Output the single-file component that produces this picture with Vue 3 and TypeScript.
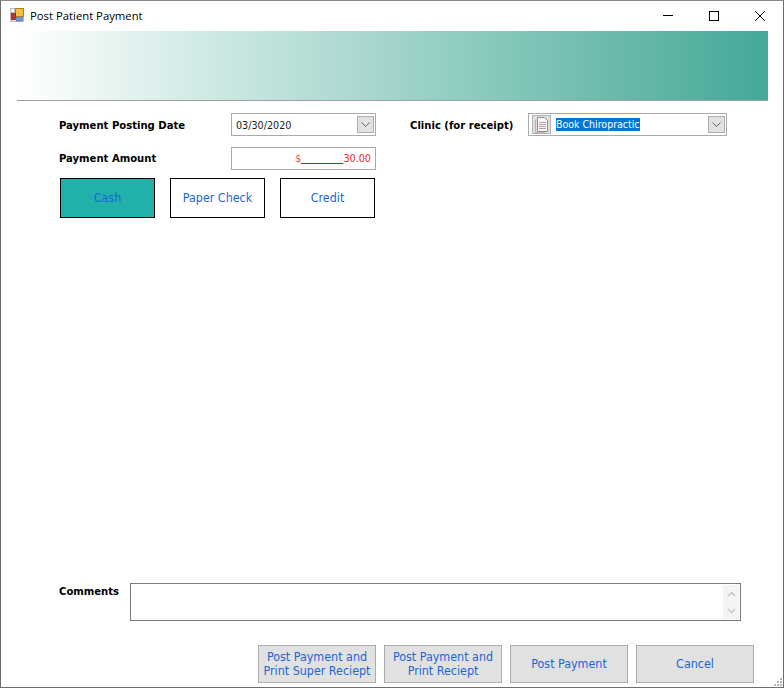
<script setup lang="ts">
const footerButtons: string[][] = [
  ['Post Payment and', 'Print Super Reciept'],
  ['Post Payment and', 'Print Reciept'],
  ['Post Payment'],
  ['Cancel'],
]
const payTypes = ['Cash', 'Paper Check', 'Credit']
</script>

<template>
  <div class="window">
    <header class="titlebar">
      <svg class="app-icon" width="14" height="14" viewBox="0 0 14 14">
        <rect x="0.5" y="0.5" width="13" height="13" fill="#f6f6f6" stroke="#bcbcbc" />
        <path d="M0 4.5H6M4.5 0V5M0 11.5H6M3 11V14" stroke="#bcbcbc" fill="none" />
        <rect x="5.5" y="0.5" width="8" height="8" fill="#f2c23e" stroke="#b07c1c" />
        <rect x="1.5" y="5.5" width="4" height="6" fill="#c0332c" stroke="#7a1f1a" stroke-width="0.7" />
        <rect x="6.5" y="9.5" width="6" height="3.5" fill="#6a9ae2" stroke="#3f69ad" stroke-width="0.6" />
      </svg>
      <span class="title">Post Patient Payment</span>
      <div class="controls">
        <svg width="12" height="12" viewBox="0 0 12 12"><path d="M1 5.5H11" stroke="#000" fill="none" /></svg>
        <svg width="12" height="12" viewBox="0 0 12 12"><rect x="1.5" y="1.5" width="9" height="9" stroke="#000" fill="none" /></svg>
        <svg width="12" height="12" viewBox="0 0 12 12"><path d="M1 1L11 11M11 1L1 11" stroke="#000" fill="none" /></svg>
      </div>
    </header>

    <div class="banner"></div>

    <main class="form">
      <div class="columns">
        <div class="left">
          <div class="row date-row">
            <label class="label">Payment Posting Date</label>
            <div class="field">
              <span class="value">03/30/2020</span>
              <span class="drop">
                <svg width="9" height="5" viewBox="0 0 9 5"><path d="M0.5 0.5L4.5 4.5L8.5 0.5" stroke="#666" fill="none" /></svg>
              </span>
            </div>
          </div>
          <div class="row amount-row">
            <label class="label">Payment Amount</label>
            <div class="field amount"><span class="dollar">$</span><span class="blank"></span><span>30.00</span></div>
          </div>
          <div class="pay-types">
            <button v-for="(p, i) in payTypes" :key="p" class="pay" :class="{ active: i === 0 }">{{ p }}</button>
          </div>
        </div>
        <div class="clinic">
          <label class="label clinic-label">Clinic (for receipt)</label>
          <div class="field combo">
            <span class="doc">
              <svg width="15" height="17" viewBox="0 0 15 17">
                <path d="M3.5 1.5H10.5L13.5 4.5V15.5H3.5Z" fill="#f8f8f8" stroke="#8f8f8f" />
                <path d="M1.5 4V16.5H11" fill="none" stroke="#c8aeaa" />
                <path d="M5 6.5H12M5 8.5H12M5 10.5H12M5 12.5H12" stroke="#b79f9f" />
              </svg>
            </span>
            <span class="selected">Book Chiropractic</span>
            <span class="drop">
              <svg width="9" height="5" viewBox="0 0 9 5"><path d="M0.5 0.5L4.5 4.5L8.5 0.5" stroke="#666" fill="none" /></svg>
            </span>
          </div>
        </div>
      </div>

      <div class="comments">
        <label class="label">Comments</label>
        <div class="memo">
          <div class="scroll">
            <svg width="9" height="6" viewBox="0 0 9 6"><path d="M1 5L4.5 1.5L8 5" stroke="#c4c4c4" stroke-width="1.5" fill="none" /></svg>
            <svg width="9" height="6" viewBox="0 0 9 6"><path d="M1 1L4.5 4.5L8 1" stroke="#c4c4c4" stroke-width="1.5" fill="none" /></svg>
          </div>
        </div>
      </div>

      <footer class="footer">
        <button v-for="(b, i) in footerButtons" :key="i" class="action">
          <span v-for="line in b" :key="line" class="line">{{ line }}</span>
        </button>
      </footer>
    </main>

    <svg class="grip" width="10" height="10" viewBox="0 0 10 10" fill="#b4b4b4">
      <rect x="7" y="1" width="2" height="2" />
      <rect x="4" y="4" width="2" height="2" />
      <rect x="7" y="4" width="2" height="2" />
      <rect x="1" y="7" width="2" height="2" />
      <rect x="4" y="7" width="2" height="2" />
      <rect x="7" y="7" width="2" height="2" />
    </svg>
  </div>
</template>

<style scoped>
.window {
  position: relative;
  box-sizing: border-box;
  width: 784px;
  height: 688px;
  background: #fff;
  border: 1px solid #6e6e6e;
  border-top-color: #8a8a8a;
  display: flex;
  flex-direction: column;
  font-family: "DejaVu Sans Condensed", "DejaVu Sans", sans-serif;
  font-size: 11px;
  overflow: hidden;
}
.titlebar {
  height: 30px;
  flex: none;
  display: flex;
  align-items: center;
  padding-left: 9px;
}
.app-icon { flex: none; margin-bottom: 2px; }
.title {
  margin-left: 6px;
  margin-bottom: 2px;
  font-family: "Open Sans", sans-serif;
  font-size: 11.3px;
  color: #000;
}
.controls {
  margin-left: auto;
  display: flex;
  gap: 34px;
  padding-right: 17px;
}
.banner {
  flex: none;
  height: 69px;
  margin: 0 15px 0 16px;
  background: linear-gradient(90deg, #ffffff 0%, #44a997 100%);
  border-bottom: 1px solid #a0a0a0;
}
.form {
  flex: 1;
  display: flex;
  flex-direction: column;
  min-height: 0;
}
.columns {
  display: flex;
  padding: 12px 0 0 58px;
}
.left { width: 351px; flex: none; }
.row { display: flex; align-items: center; }
.amount-row { margin-top: 11px; }
.label {
  font-weight: 700;
  font-size: 11.2px;
  color: #000;
  white-space: nowrap;
}
.row .label { width: 172px; flex: none; }
.date-row .label { padding-top: 2px; }
.field {
  box-sizing: border-box;
  width: 145px;
  height: 23px;
  border: 1px solid #ababab;
  display: flex;
  align-items: center;
  background: #fff;
  padding-left: 4px;
  font-size: 10.7px;
  color: #1c1c1c;
}
.value { flex: 1; padding-top: 2px; }
.drop {
  box-sizing: border-box;
  width: 17px;
  height: 17px;
  margin-right: 1px;
  background: #e1e1e1;
  border: 1px solid #adadad;
  display: flex;
  align-items: center;
  justify-content: center;
  flex: none;
}
.amount {
  justify-content: flex-end;
  padding-right: 4px;
  color: #ee1c25;
}
.dollar { color: #e8641e; }
.blank {
  width: 42px;
  height: 10px;
  border-bottom: 1px solid #ff0000;
}
.pay-types {
  display: flex;
  gap: 15px;
  margin: 8px 0 0 1px;
}
.pay {
  box-sizing: border-box;
  width: 95px;
  height: 40px;
  background: #fff;
  border: 1px solid #000;
  font-family: "DejaVu Sans Condensed", "DejaVu Sans", sans-serif;
  font-size: 12.4px;
  color: #1a66d8;
  padding: 0 0 2px;
}
.pay.active {
  background: #20b2aa;
}
.clinic {
  display: flex;
  align-items: flex-start;
}
.clinic-label { width: 118px; flex: none; line-height: 25px; }
.combo {
  width: 199px;
  padding-left: 3px;
}
.doc {
  box-sizing: border-box;
  width: 19px;
  height: 19px;
  background: #dedede;
  border: 1px solid #b4b4b4;
  display: flex;
  align-items: center;
  justify-content: center;
  flex: none;
}
.selected {
  margin-left: 5px;
  background: #0078d7;
  color: #fff;
  height: 13px;
  line-height: 13px;
  font-size: 10.5px;
  white-space: nowrap;
}
.combo .drop { margin-left: auto; }
.comments {
  display: flex;
  align-items: flex-start;
  margin: auto 0 0 58px;
}
.comments .label {
  width: 71px;
  flex: none;
  padding-top: 1px;
  line-height: 16px;
}
.memo {
  box-sizing: border-box;
  width: 611px;
  height: 38px;
  border: 1px solid #7a7a7a;
  display: flex;
  justify-content: flex-end;
  padding: 1px;
}
.scroll {
  width: 16px;
  background: #f4f4f4;
  display: flex;
  flex-direction: column;
  align-items: center;
  justify-content: space-around;
}
.footer {
  display: flex;
  justify-content: flex-end;
  gap: 8px;
  padding: 24px 29px 4px 0;
}
.action {
  box-sizing: border-box;
  width: 118px;
  height: 38px;
  background: #e1e1e1;
  border: 1px solid #adadad;
  font-family: "DejaVu Sans Condensed", "DejaVu Sans", sans-serif;
  font-size: 12.4px;
  line-height: 14px;
  color: #1a66d8;
  padding: 0;
  display: flex;
  flex-direction: column;
  align-items: center;
  justify-content: center;
}
.line { display: block; white-space: nowrap; }
.grip {
  position: absolute;
  right: 0;
  bottom: 0;
}
</style>
